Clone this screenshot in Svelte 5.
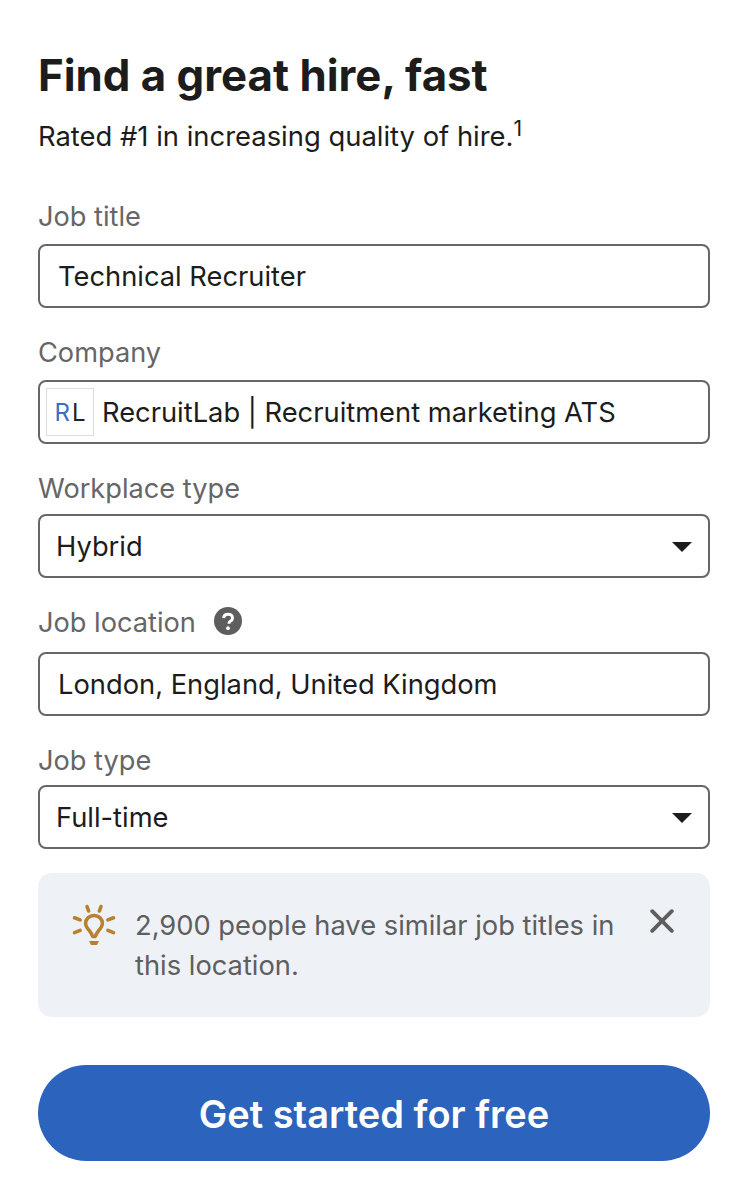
<script>
  let jobTitle = $state('Technical Recruiter')
  let company = $state('RecruitLab | Recruitment marketing ATS')
  let location = $state('London, England, United Kingdom')
  let showHint = $state(true)
</script>

<main class="card">
  <h1>Find a great hire, fast</h1>
  <p class="sub">Rated #1 in increasing quality of hire.<sup>1</sup></p>

  <form class="form" onsubmit={(e) => e.preventDefault()}>
    <div class="field first">
      <span class="label">Job title</span>
      <input class="box" bind:value={jobTitle} />
    </div>

    <div class="field">
      <span class="label">Company</span>
      <div class="box company">
        <span class="logo"><b>R</b>L</span>
        <input bind:value={company} />
      </div>
    </div>

    <div class="field narrow">
      <span class="label">Workplace type</span>
      <div class="box select"><span>Hybrid</span><i class="caret"></i></div>
    </div>

    <div class="field wide">
      <span class="label">Job location
        <svg class="help" viewBox="0 0 28 28" width="28" height="28" aria-hidden="true">
          <circle cx="14" cy="14" r="14" fill="#5e5e5e" />
          <path d="M9.600 11.200c.2-2.600 2-4 4.500-4 2.600 0 4.400 1.500 4.400 3.700 0 1.700-.9 2.600-2.200 3.400-1 .6-1.300 1-1.300 2v.4" fill="none" stroke="#fff" stroke-width="3" />
          <circle cx="14" cy="21.200" r="1.900" fill="#fff" />
        </svg>
      </span>
      <input class="box" bind:value={location} />
    </div>

    <div class="field narrowest">
      <span class="label">Job type</span>
      <div class="box select"><span>Full-time</span><i class="caret"></i></div>
    </div>
  </form>

  {#if showHint}
    <div class="hint">
      <svg class="bulb" viewBox="0 0 44 42" width="44" height="42" aria-hidden="true">
        <g fill="none" stroke="#b9802f" stroke-linecap="round">
          <path d="M15 2.500l1.600 4.500M29 2.500l-1.600 4.500M2.500 13.800l5.600 2.100M41.500 13.800l-5.600 2.100M2.500 28.600l5.600-2.200M41.500 28.600l-5.600-2.200" stroke-width="3.600" />
          <path d="M22 11.600c-5 0-8.400 3.500-8.400 7.800 0 4.800 5.800 7.800 7 13h2.800c1.200-5.200 7-8.200 7-13 0-4.300-3.400-7.800-8.400-7.800z" stroke-width="3.500" stroke-linejoin="round" />
        </g>
        <path d="M17 37h10l-2 4h-6z" fill="#b9802f" />
      </svg>
      <p>2,900 people have similar job titles in this location.</p>
      <button type="button" class="close" aria-label="Dismiss" onclick={() => (showHint = false)}>
        <svg viewBox="0 0 24 24" width="24" height="24" aria-hidden="true">
          <path d="M2.200 2.200l19.600 19.600M21.800 2.200L2.200 21.800" stroke="#5e5e5e" stroke-width="3.800" stroke-linecap="round" />
        </svg>
      </button>
    </div>
  {/if}

  <button type="button" class="cta">Get started for free</button>
</main>

<style>
  :global(body) {
    background: #fff;
  }

  .card {
    box-sizing: border-box;
    width: 746px;
    height: 1202px;
    padding: 48px 36px 0 38px;
    font-family: Inter, "Liberation Sans", sans-serif;
    color: #1c1c1c;
  }

  h1 {
    margin: 0;
    font-size: 43.8px;
    line-height: 56px;
    font-weight: 700;
  }

  .sub {
    margin: 15px 0 0;
    font-size: 27.4px;
    line-height: 34px;
  }

  sup {
    font-size: 21px;
    line-height: 0;
    vertical-align: 10px;
  }

  .form {
    display: flex;
    flex-direction: column;
  }

  .field {
    display: flex;
    flex-direction: column;
    margin-top: 27px;
    --label-gap: 11px;
  }

  .field.first {
    margin-top: 46px;
  }

  .field.narrow {
    --label-gap: 9px;
  }

  .field.narrowest {
    --label-gap: 8px;
  }

  .field.wide {
    --label-gap: 13px;
  }

  .label {
    display: flex;
    align-items: center;
    gap: 18px;
    height: 34px;
    margin-bottom: var(--label-gap);
    font-size: 27.2px;
    color: #666;
  }

  .help {
    margin-top: -2px;
  }

  .box {
    box-sizing: border-box;
    width: 672px;
    height: 64px;
    border: 2px solid #666;
    border-radius: 8px;
    background: #fff;
    font: inherit;
    font-size: 27.3px;
    color: #1c1c1c;
    outline: none;
    padding: 0 18px;
  }

  .company {
    display: flex;
    align-items: center;
    gap: 8px;
    padding: 0 6px;
  }

  .company input {
    flex: 1;
    min-width: 0;
    border: 0;
    padding: 0;
    outline: none;
    font: inherit;
    color: inherit;
  }

  .logo {
    box-sizing: border-box;
    flex: none;
    width: 48px;
    height: 48px;
    border: 1px solid #dcdcdc;
    display: flex;
    align-items: center;
    justify-content: center;
    gap: 2px;
    font-size: 24px;
    color: #222;
  }

  .logo b {
    font-weight: 400;
    color: #3a6fc4;
  }

  .select {
    display: flex;
    align-items: center;
    justify-content: space-between;
    padding: 0 16px;
  }

  .caret {
    width: 0;
    height: 0;
    border-left: 10px solid transparent;
    border-right: 10px solid transparent;
    border-top: 10px solid #1c1c1c;
    margin-top: 1px;
  }

  .hint {
    box-sizing: border-box;
    display: flex;
    align-items: flex-start;
    width: 672px;
    height: 144px;
    margin-top: 24px;
    padding: 31px 36px 0 34px;
    background: #eef1f6;
    border-radius: 14px;
    color: #5e5e5e;
  }

  .bulb {
    flex: none;
    margin-right: 19px;
  }

  .hint p {
    flex: 1;
    margin: 2px 0 0;
    font-size: 27.3px;
    line-height: 40px;
  }

  .close {
    flex: none;
    padding: 0;
    border: 0;
    background: none;
    margin-top: 5px;
    display: flex;
  }

  .cta {
    display: block;
    width: 672px;
    height: 96px;
    margin-top: 48px;
    padding: 1px 0 0;
    border: 0;
    border-radius: 48px;
    background: #2b63bd;
    color: #fff;
    font: inherit;
    font-size: 38px;
    font-weight: 600;
  }
</style>
